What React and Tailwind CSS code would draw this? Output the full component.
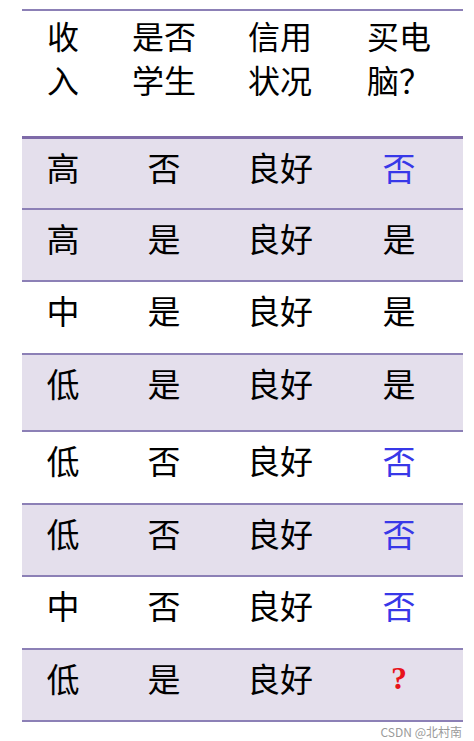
import React from "react";

const rows = [
  { a: "高", b: "否", c: "良好", d: "否", h: 71, bg: "bg-[#e4dfec]" },
  { a: "高", b: "是", c: "良好", d: "是", h: 72, bg: "bg-[#e4dfec]" },
  { a: "中", b: "是", c: "良好", d: "是", h: 73, bg: "bg-white" },
  { a: "低", b: "是", c: "良好", d: "是", h: 77, bg: "bg-[#e4dfec]" },
  { a: "低", b: "否", c: "良好", d: "否", h: 73, bg: "bg-white" },
  { a: "低", b: "否", c: "良好", d: "否", h: 72, bg: "bg-[#e4dfec]" },
  { a: "中", b: "否", c: "良好", d: "否", h: 73, bg: "bg-white" },
  { a: "低", b: "是", c: "良好", d: "?", h: 72, bg: "bg-[#e4dfec]" },
];

const headers = [
  ["收", "入"],
  ["是否", "学生"],
  ["信用", "状况"],
  ["买电", "脑？"],
];

const cols = "grid grid-cols-[82px_120px_112px_126px]";

const App = () => {
  return (
    <div
      className="relative w-[474px] h-[741px] bg-white pt-[9px] text-black"
      style={{ fontFamily: '"Noto Sans CJK SC", "Noto Sans", sans-serif' }}
    >
      <div className="ml-[22px] w-[441px]">
        <div
          className={`${cols} h-[130px] border-t-2 border-b-[3px] border-t-[#8c80b6] border-b-[#7e6aa8] pt-[6px] text-[32px]`}
        >
          {headers.map((h, i) => (
            <div key={i} className="flex flex-col items-center gap-[8px]">
              <span className="leading-[36px]">{h[0]}</span>
              <span className="leading-[36px]">{h[1]}</span>
            </div>
          ))}
        </div>
        {rows.map((r, i) => (
          <div
            key={i}
            className={`${cols} ${r.bg} border-b-2 border-[#8c80b6] pt-[8px] text-[33px] leading-[40px]`}
            style={{ height: r.h }}
          >
            <div className="text-center">{r.a}</div>
            <div className="text-center">{r.b}</div>
            <div className="text-center">{r.c}</div>
            {r.d === "?" ? (
              <div
                className="text-center text-[32px] font-bold text-[#e8131b]"
                style={{ fontFamily: '"Liberation Serif", serif' }}
              >
                ?
              </div>
            ) : (
              <div className={r.d === "否" ? "text-center text-[#3838e8]" : "text-center"}>
                {r.d}
              </div>
            )}
          </div>
        ))}
      </div>
      <div className="absolute right-[12px] top-[724px] text-[12px] leading-[16px] text-[#9a9a9a]">
        CSDN @北村南
      </div>
    </div>
  );
};

export default App;
